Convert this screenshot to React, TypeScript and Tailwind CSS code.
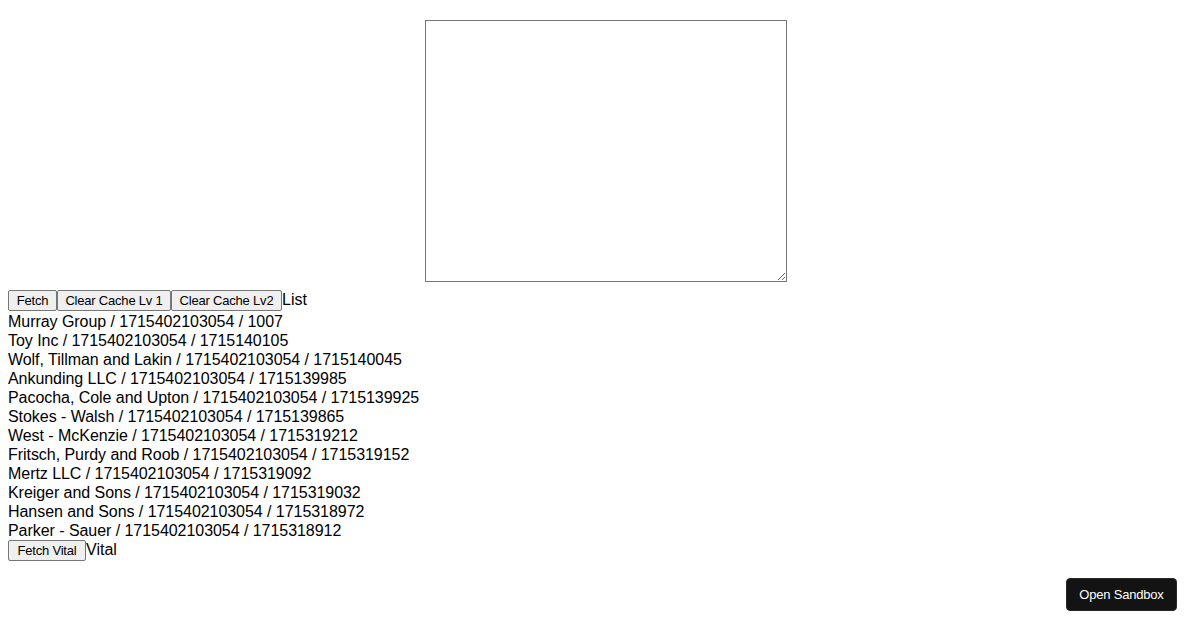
import React from "react";

const items = [
  "Murray Group / 1715402103054 / 1007",
  "Toy Inc / 1715402103054 / 1715140105",
  "Wolf, Tillman and Lakin / 1715402103054 / 1715140045",
  "Ankunding LLC / 1715402103054 / 1715139985",
  "Pacocha, Cole and Upton / 1715402103054 / 1715139925",
  "Stokes - Walsh / 1715402103054 / 1715139865",
  "West - McKenzie / 1715402103054 / 1715319212",
  "Fritsch, Purdy and Roob / 1715402103054 / 1715319152",
  "Mertz LLC / 1715402103054 / 1715319092",
  "Kreiger and Sons / 1715402103054 / 1715319032",
  "Hansen and Sons / 1715402103054 / 1715318972",
  "Parker - Sauer / 1715402103054 / 1715318912",
];

function Btn({ children, className }: { children: React.ReactNode; className: string }) {
  return (
    <button
      className={
        "h-[21px] px-0 flex items-center justify-center whitespace-nowrap bg-[#efefef] border border-[#767676] rounded-[2px] text-[13px] leading-[15px] tracking-[-0.2px] text-black font-['Liberation_Sans',Arial,sans-serif] " +
        className
      }
    >
      {children}
    </button>
  );
}

export default function App() {
  return (
    <div className="min-h-[630px] bg-white p-2 text-base text-black font-['Liberation_Sans',Arial,sans-serif]">
      <div className="flex justify-center">
        <textarea className="ml-[12px] mt-[12px] w-[362px] h-[262px] border border-[#767676] bg-white" />
      </div>
      <div className="mt-[8px] flex h-[22px] items-start">
        <Btn className="w-[49px]">Fetch</Btn>
        <Btn className="w-[114px]">Clear Cache Lv 1</Btn>
        <Btn className="w-[111px]">Clear Cache Lv2</Btn>
        <span className="leading-[19px]">List</span>
      </div>
      <div className="flex flex-col">
        {items.map((t) => (
          <div key={t} className="leading-[19px] whitespace-nowrap tracking-[-0.05px]">
            {t}
          </div>
        ))}
      </div>
      <div className="flex h-[22px] items-start">
        <Btn className="w-[78px]">Fetch Vital</Btn>
        <span className="leading-[19px]">Vital</span>
      </div>
      <button className="fixed right-[23px] bottom-[19px] w-[111px] h-[33px] px-0 rounded-[4px] bg-[#131313] border border-[#2a2a2a] text-white text-[13px] tracking-[-0.2px] font-['Liberation_Sans',Arial,sans-serif]">
        Open Sandbox
      </button>
    </div>
  );
}
